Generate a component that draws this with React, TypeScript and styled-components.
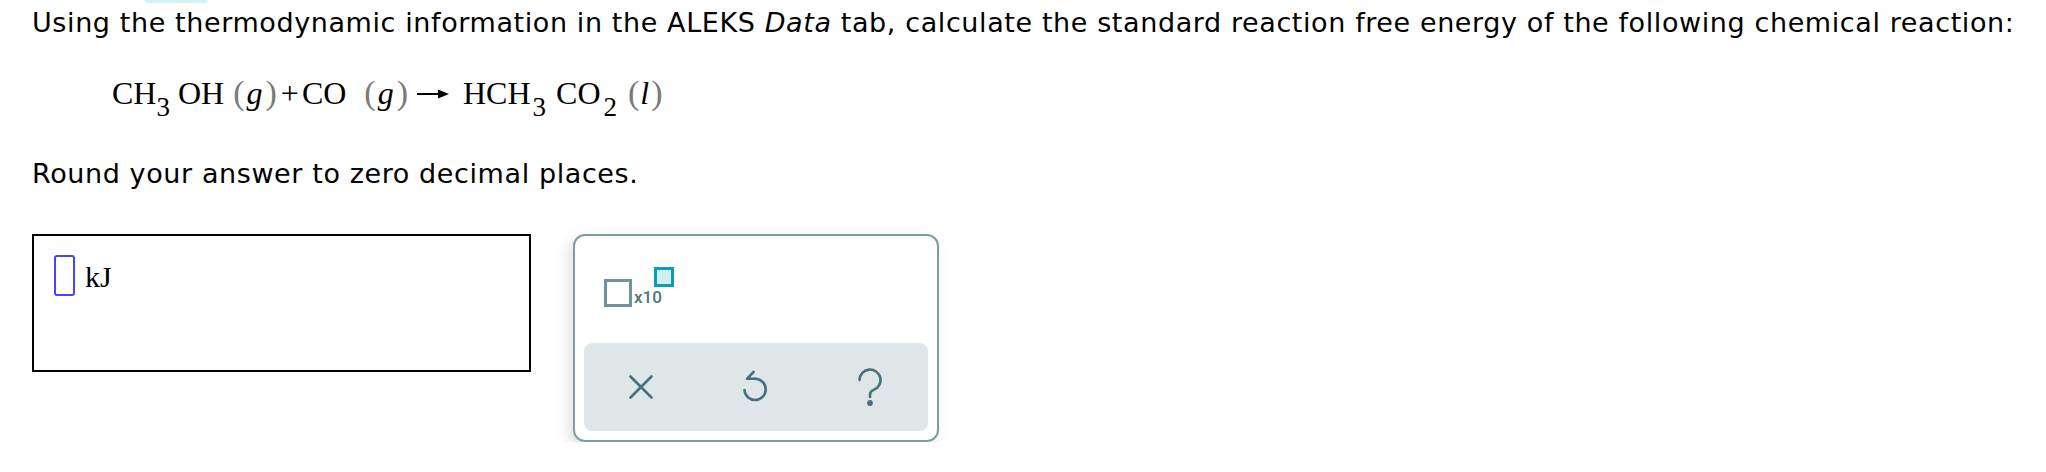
import React from "react";
import styled, { createGlobalStyle } from "styled-components";

const GlobalStyle = createGlobalStyle`
  body {
    margin: 0;
    background: #ffffff;
    color: #000000;
    font-family: "DejaVu Sans", Verdana, sans-serif;
  }
`;

const Page = styled.main`
  padding: 0 0 0 32px;
`;

const TopTab = styled.div`
  margin-left: 113px;
  width: 63px;
  height: 3px;
  background: #d4f1f6;
  border-radius: 0 0 4px 4px;
`;

const Prompt = styled.p`
  margin: 4px 0 0;
  font-size: 27px;
  line-height: 32px;
  letter-spacing: 0.6px;
  white-space: nowrap;

  em {
    font-style: italic;
  }
`;

const Equation = styled.div`
  margin: 34px 0 0 80px;
  font-family: "Liberation Serif", "Times New Roman", serif;
  font-size: 32px;
  line-height: 40px;
  height: 40px;
  white-space: nowrap;
  display: flex;
  align-items: baseline;
`;

const Chem = styled.span``;

const Sub = styled.span<{ $before: number; $after: number }>`
  font-size: 27px;
  line-height: 0;
  position: relative;
  top: 12px;
  margin: 0 ${(p) => p.$after}px 0 ${(p) => p.$before}px;
`;

const Paren = styled.span<{ $gap: number }>`
  color: #7a7a7a;
  font-size: 34px;
  margin-left: ${(p) => p.$gap}px;
`;

const State = styled.i<{ $gap: number }>`
  font-style: italic;
  margin-left: ${(p) => p.$gap}px;
`;

const Plus = styled.span`
  margin: 0 3px 0 4px;
`;

const Arrow = styled.svg`
  margin: 0 14px 0 9px;
  align-self: center;
  position: relative;
  top: 1px;
`;

const Instruction = styled.p`
  margin: 45px 0 0;
  font-size: 27px;
  line-height: 32px;
  letter-spacing: 0.6px;
`;

const AnswerRow = styled.div`
  margin-top: 44px;
  display: flex;
  align-items: flex-start;
  gap: 42px;
`;

const AnswerBox = styled.div`
  box-sizing: border-box;
  width: 499px;
  height: 138px;
  border: 2px solid #000;
  padding: 19px 0 0 20px;
  display: flex;
  align-items: flex-start;
`;

const InputSlot = styled.div`
  box-sizing: border-box;
  width: 21px;
  height: 41px;
  border: 2px solid #4545ff;
  border-radius: 3px;
`;

const Unit = styled.span`
  margin-left: 10px;
  font-family: "Liberation Serif", "Times New Roman", serif;
  font-size: 30px;
  line-height: 44px;
`;

const Palette = styled.div`
  box-sizing: border-box;
  width: 366px;
  height: 208px;
  border: 2px solid #7d9da6;
  border-radius: 12px;
  padding: 9px;
  background: #fff;
  box-shadow: -4px 5px 14px rgba(0, 0, 0, 0.13);
  display: flex;
  flex-direction: column;
  justify-content: space-between;
`;

const ToolRow = styled.div`
  padding: 22px 0 0 20px;
`;

const SciNotation = styled.div`
  display: inline-flex;
  height: 40px;
  align-items: flex-end;
`;

const Mantissa = styled.span`
  box-sizing: border-box;
  width: 28px;
  height: 28px;
  border: 3px solid #6f939c;
`;

const Base = styled.span`
  margin: 0 0 1px 2px;
  font-family: Roboto, "Liberation Sans", sans-serif;
  font-size: 17px;
  font-weight: 500;
  line-height: 17px;
  color: #4d7480;
`;

const Exponent = styled.span`
  box-sizing: border-box;
  align-self: flex-start;
  width: 20px;
  height: 20px;
  margin-left: -8px;
  border: 3px solid #0b9cb6;
  background: #cdeff4;
`;

const ActionBar = styled.div`
  height: 88px;
  border-radius: 8px;
  background: #dfe6e8;
  display: grid;
  grid-template-columns: repeat(3, 1fr);
  align-items: center;
  justify-items: center;
`;

const ActionButton = styled.button`
  border: none;
  background: none;
  padding: 0;
  display: flex;
  align-items: center;
  justify-content: center;
  color: #45717d;
  cursor: pointer;
`;

const ClearIcon = () => (
  <svg width="24" height="24" viewBox="0 0 24 24" fill="none" stroke="currentColor" strokeWidth="2.6" strokeLinecap="round">
    <path d="M1.5 1.5 L22.5 22.5 M22.5 1.5 L1.5 22.5" />
  </svg>
);

const UndoIcon = () => (
  <svg width="26" height="34" viewBox="0 0 26 34" fill="none" stroke="currentColor" strokeWidth="2.6" strokeLinecap="round" strokeLinejoin="round">
    <path d="M10.5 2 L4 8.8 H12" />
    <path d="M12 8.8 A10.6 10.6 0 1 1 1.5 20" />
  </svg>
);

const HelpIcon = () => (
  <svg width="26" height="38" viewBox="0 0 26 38" fill="none" stroke="currentColor" strokeWidth="2.6" strokeLinecap="round">
    <path d="M1.5 12 A10.5 10.5 0 1 1 15.6 21.9 Q12 23.5 12 26.5 V29" />
    <circle cx="12" cy="35" r="1.6" fill="currentColor" />
  </svg>
);

const App = () => {
  return (
    <>
      <GlobalStyle />
      <Page>
        <TopTab />
        <Prompt>
          Using the thermodynamic information in the ALEKS <em>Data</em> tab, calculate the
          standard reaction free energy of the following chemical reaction:
        </Prompt>

        <Equation>
          <Chem>CH</Chem>
          <Sub $before={0} $after={8}>3</Sub>
          <Chem>OH</Chem>
          <Paren $gap={9}>(</Paren>
          <State $gap={2}>g</State>
          <Paren $gap={3}>)</Paren>
          <Plus>+</Plus>
          <Chem>CO</Chem>
          <Paren $gap={18}>(</Paren>
          <State $gap={2}>g</State>
          <Paren $gap={3}>)</Paren>
          <Arrow width="32" height="12" viewBox="0 0 32 12">
            <line x1="0" y1="6" x2="24" y2="6" stroke="#000" strokeWidth="2" />
            <polygon points="21,1.5 32,6 21,10.5" fill="#000" />
          </Arrow>
          <Chem>HCH</Chem>
          <Sub $before={2} $after={10}>3</Sub>
          <Chem>CO</Chem>
          <Sub $before={3} $after={11}>2</Sub>
          <Paren $gap={0}>(</Paren>
          <State $gap={1}>l</State>
          <Paren $gap={2}>)</Paren>
        </Equation>

        <Instruction>Round your answer to zero decimal places.</Instruction>

        <AnswerRow>
          <AnswerBox>
            <InputSlot />
            <Unit>kJ</Unit>
          </AnswerBox>

          <Palette>
            <ToolRow>
              <SciNotation>
                <Mantissa />
                <Base>x10</Base>
                <Exponent />
              </SciNotation>
            </ToolRow>
            <ActionBar>
              <ActionButton aria-label="Clear">
                <ClearIcon />
              </ActionButton>
              <ActionButton aria-label="Undo">
                <UndoIcon />
              </ActionButton>
              <ActionButton aria-label="Help">
                <HelpIcon />
              </ActionButton>
            </ActionBar>
          </Palette>
        </AnswerRow>
      </Page>
    </>
  );
};

export default App;
